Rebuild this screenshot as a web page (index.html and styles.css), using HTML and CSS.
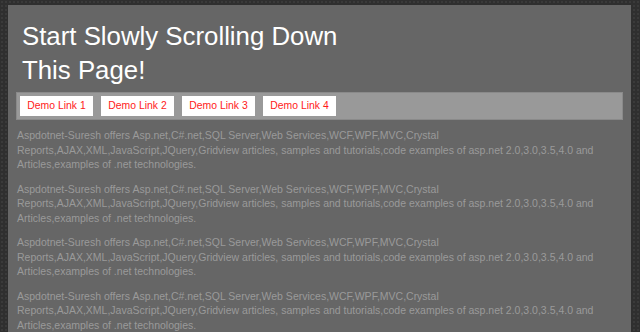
FILE: index.html
```html
<!DOCTYPE html>
<html lang="en">
<head>
  <meta charset="UTF-8">
  <title>Start Slowly Scrolling Down This Page!</title>
  <link rel="stylesheet" href="styles.css">
</head>
<body>

<div class="wrapper">
  <h1 class="title">Start Slowly Scrolling Down This Page!</h1>

  <div class="nav">
    <a href="#">Demo Link 1</a>
    <a href="#">Demo Link 2</a>
    <a href="#">Demo Link 3</a>
    <a href="#">Demo Link 4</a>
  </div>

  <p>Aspdotnet-Suresh offers Asp.net,C#.net,SQL Server,Web Services,WCF,WPF,MVC,Crystal Reports,AJAX,XML,JavaScript,JQuery,Gridview articles, samples and tutorials,code examples of asp.net 2.0,3.0,3.5,4.0 and Articles,examples of .net technologies.</p>
  <p>Aspdotnet-Suresh offers Asp.net,C#.net,SQL Server,Web Services,WCF,WPF,MVC,Crystal Reports,AJAX,XML,JavaScript,JQuery,Gridview articles, samples and tutorials,code examples of asp.net 2.0,3.0,3.5,4.0 and Articles,examples of .net technologies.</p>
  <p>Aspdotnet-Suresh offers Asp.net,C#.net,SQL Server,Web Services,WCF,WPF,MVC,Crystal Reports,AJAX,XML,JavaScript,JQuery,Gridview articles, samples and tutorials,code examples of asp.net 2.0,3.0,3.5,4.0 and Articles,examples of .net technologies.</p>
  <p>Aspdotnet-Suresh offers Asp.net,C#.net,SQL Server,Web Services,WCF,WPF,MVC,Crystal Reports,AJAX,XML,JavaScript,JQuery,Gridview articles, samples and tutorials,code examples of asp.net 2.0,3.0,3.5,4.0 and Articles,examples of .net technologies.</p>
  <p>Aspdotnet-Suresh offers Asp.net,C#.net,SQL Server,Web Services,WCF,WPF,MVC,Crystal Reports,AJAX,XML,JavaScript,JQuery,Gridview articles, samples and tutorials,code examples of asp.net 2.0,3.0,3.5,4.0 and Articles,examples of .net technologies.</p>
  <p>Aspdotnet-Suresh offers Asp.net,C#.net,SQL Server,Web Services,WCF,WPF,MVC,Crystal Reports,AJAX,XML,JavaScript,JQuery,Gridview articles, samples and tutorials,code examples of asp.net 2.0,3.0,3.5,4.0 and Articles,examples of .net technologies.</p>
</div>

</body>
</html>
```

FILE: styles.css
```css
html, body {
  margin: 0;
  padding: 0;
}
body {
  background-color: #2f2f2f;
  background-image: radial-gradient(#3a3a3a 1px, transparent 1px);
  background-size: 4px 4px;
  font-family: "Liberation Sans", Arial, sans-serif;
  padding: 5px 9px 0 8px;
}
.wrapper {
  background: #666666;
  padding: 14px 8px 1px 8px;
}
.title {
  margin: 0 0 5px 0;
  padding-left: 6px;
  max-width: 360px;
  font-size: 25.8px;
  font-weight: normal;
  line-height: 34px;
  color: #ffffff;
}
.nav {
  display: flex;
  gap: 8px;
  background: #999999;
  border: 1px solid #8a8a8a;
  padding: 3px;
  margin-bottom: 8px;
}
.nav a {
  display: block;
  background: #ffffff;
  color: #ff1a1a;
  text-decoration: none;
  font-size: 10.4px;
  line-height: 14px;
  padding: 3px 0;
  width: 73px;
  text-align: center;
}
p {
  margin: 0 0 10px 0;
  padding-left: 1px;
  font-size: 10.5px;
  line-height: 14.5px;
  color: #9a9a9a;
}
```
